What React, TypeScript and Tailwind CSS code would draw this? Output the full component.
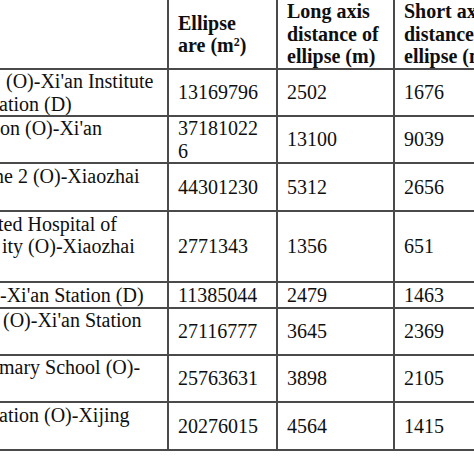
import React from 'react';

type Row = {
  h: string;
  name: { text: string; ml: string }[];
  area: React.ReactNode;
  long: string;
  short: string;
};

const rows: Row[] = [
  {
    h: 'h-[47px]',
    name: [
      { text: "(O)-Xi'an Institute", ml: 'ml-[6px]' },
      { text: 'ation (D)', ml: 'ml-[-1px]' },
    ],
    area: '13169796',
    long: '2502',
    short: '1676',
  },
  {
    h: 'h-[47px]',
    name: [
      { text: "on (O)-Xi'an", ml: 'ml-[0px]' },
      { text: '\u00a0', ml: 'ml-[0px]' },
    ],
    area: (
      <>
        37181022
        <br />6
      </>
    ),
    long: '13100',
    short: '9039',
  },
  {
    h: 'h-[48px]',
    name: [
      { text: 'ne 2 (O)-Xiaozhai', ml: 'ml-[-6px]' },
      { text: '\u00a0', ml: 'ml-[0px]' },
    ],
    area: '44301230',
    long: '5312',
    short: '2656',
  },
  {
    h: 'h-[71px]',
    name: [
      { text: 'ted Hospital of', ml: 'ml-[-2px]' },
      { text: 'ity (O)-Xiaozhai', ml: 'ml-[2px]' },
      { text: '\u00a0', ml: 'ml-[0px]' },
    ],
    area: '2771343',
    long: '1356',
    short: '651',
  },
  {
    h: 'h-[26px]',
    name: [{ text: "-Xi'an Station (D)", ml: 'ml-[0px]' }],
    area: '11385044',
    long: '2479',
    short: '1463',
  },
  {
    h: 'h-[47px]',
    name: [
      { text: "(O)-Xi'an Station", ml: 'ml-[3px]' },
      { text: '\u00a0', ml: 'ml-[0px]' },
    ],
    area: '27116777',
    long: '3645',
    short: '2369',
  },
  {
    h: 'h-[47px]',
    name: [
      { text: 'mary School (O)-', ml: 'ml-[-1px]' },
      { text: '\u00a0', ml: 'ml-[0px]' },
    ],
    area: '25763631',
    long: '3898',
    short: '2105',
  },
  {
    h: 'h-[48px]',
    name: [
      { text: 'ation (O)-Xijing', ml: 'ml-[-1px]' },
      { text: '\u00a0', ml: 'ml-[0px]' },
    ],
    area: '20276015',
    long: '4564',
    short: '1415',
  },
];

const grid = 'grid grid-cols-[167px_109px_117px_120px] border-b-2 border-[#4a4a4a]';
const cell = 'flex flex-col justify-center border-l-2 border-[#4a4a4a] pl-[9px] whitespace-nowrap overflow-hidden';

export default function App() {
  return (
    <div
      className="w-[474px] h-[474px] overflow-hidden bg-white text-[#0f0f0f] text-[20px] leading-[22.5px]"
      style={{ fontFamily: '"Liberation Serif", "Times New Roman", serif' }}
    >
      {/* Header */}
      <div className={`${grid} h-[70px] font-bold`}>
        <div />
        <div className={cell}>
          <span>Ellipse</span>
          <span>
            are (m<sup className="text-[12px] leading-none">2</sup>)
          </span>
        </div>
        <div className={cell}>
          <span>Long axis</span>
          <span>distance of</span>
          <span>ellipse (m)</span>
        </div>
        <div className={cell}>
          <span>Short axis</span>
          <span>distance of</span>
          <span>ellipse (m)</span>
        </div>
      </div>

      {rows.map((r, i) => (
        <div key={i} className={`${grid} ${r.h}`}>
          <div className="flex flex-col justify-center overflow-hidden whitespace-nowrap">
            {r.name.map((n, j) => (
              <span key={j} className={n.ml}>
                {n.text}
              </span>
            ))}
          </div>
          <div className={cell}>
            <span>{r.area}</span>
          </div>
          <div className={cell}>
            <span>{r.long}</span>
          </div>
          <div className={cell}>
            <span>{r.short}</span>
          </div>
        </div>
      ))}
    </div>
  );
}
